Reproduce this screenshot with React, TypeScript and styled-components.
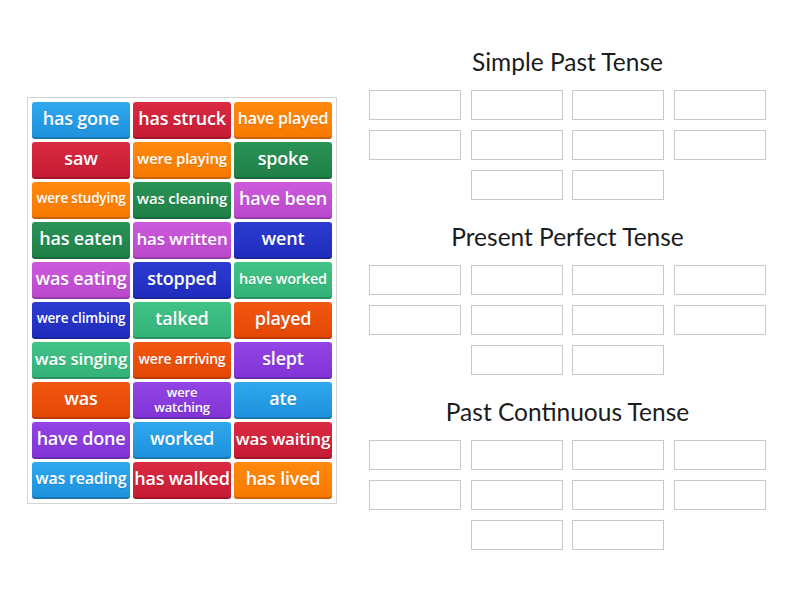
import styled, { createGlobalStyle } from "styled-components";

type Tone =
  | "blue"
  | "red"
  | "orange"
  | "green"
  | "magenta"
  | "royal"
  | "teal"
  | "flame"
  | "violet";

interface Card {
  text: string;
  tone: Tone;
  size?: number;
  wrap?: boolean;
}

const tones: Record<Tone, [string, string]> = {
  blue: ["#2fa8ee", "#1e90dc"],
  red: ["#db2a43", "#c41b33"],
  orange: ["#ff8a0d", "#f87800"],
  green: ["#2a9356", "#1f7f47"],
  magenta: ["#cc5bdc", "#b947cb"],
  royal: ["#2c3bd0", "#1f2cbd"],
  teal: ["#41c286", "#33b276"],
  flame: ["#f2580f", "#e24606"],
  violet: ["#9444e4", "#8133d6"],
};

const cards: Card[] = [
  { text: "has gone", tone: "blue" },
  { text: "has struck", tone: "red" },
  { text: "have played", tone: "orange", size: 16 },
  { text: "saw", tone: "red" },
  { text: "were playing", tone: "orange", size: 15 },
  { text: "spoke", tone: "green" },
  { text: "were studying", tone: "orange", size: 13.5 },
  { text: "was cleaning", tone: "green", size: 15 },
  { text: "have been", tone: "magenta" },
  { text: "has eaten", tone: "green" },
  { text: "has written", tone: "magenta", size: 17 },
  { text: "went", tone: "royal" },
  { text: "was eating", tone: "magenta" },
  { text: "stopped", tone: "royal" },
  { text: "have worked", tone: "teal", size: 14.5 },
  { text: "were climbing", tone: "royal", size: 13.5 },
  { text: "talked", tone: "teal" },
  { text: "played", tone: "flame" },
  { text: "was singing", tone: "teal", size: 17 },
  { text: "were arriving", tone: "flame", size: 14 },
  { text: "slept", tone: "violet" },
  { text: "was", tone: "flame" },
  { text: "were watching", tone: "violet", size: 13, wrap: true },
  { text: "ate", tone: "blue" },
  { text: "have done", tone: "violet" },
  { text: "worked", tone: "blue" },
  { text: "was waiting", tone: "red", size: 17 },
  { text: "was reading", tone: "blue", size: 16 },
  { text: "has walked", tone: "red" },
  { text: "has lived", tone: "orange" },
];

const groups = ["Simple Past Tense", "Present Perfect Tense", "Past Continuous Tense"];

const GlobalStyle = createGlobalStyle`
  html, body {
    margin: 0;
    padding: 0;
    background: #ffffff;
  }
  body {
    font-family: "Open Sans", "Noto Sans", sans-serif;
  }
`;

function App() {
  return (
    <>
      <GlobalStyle />
      <Page>
        <Bank>
          {cards.map((card) => (
            <Tile key={card.text} $tone={card.tone} $size={card.size ?? 18}>
              {card.wrap ? <Wrapped>{card.text}</Wrapped> : card.text}
            </Tile>
          ))}
        </Bank>

        <Groups>
          {groups.map((name) => (
            <Group key={name}>
              <GroupTitle>{name}</GroupTitle>
              <Slots>
                {Array.from({ length: 10 }).map((_, i) => (
                  <Slot key={i} />
                ))}
              </Slots>
            </Group>
          ))}
        </Groups>
      </Page>
    </>
  );
}

const Page = styled.div`
  width: 800px;
  height: 600px;
  display: flex;
  align-items: flex-start;
  padding-left: 27px;
  box-sizing: border-box;
`;

const Bank = styled.div`
  margin-top: 97px;
  width: 310px;
  box-sizing: border-box;
  border: 1px solid #d4d4d4;
  padding: 4px;
  display: grid;
  grid-template-columns: repeat(3, 98px);
  grid-auto-rows: 37px;
  gap: 3px;
`;

const Tile = styled.div<{ $tone: Tone; $size: number }>`
  display: flex;
  align-items: center;
  justify-content: center;
  border-radius: 3px;
  background: linear-gradient(
    ${({ $tone }) => tones[$tone][0]},
    ${({ $tone }) => tones[$tone][1]}
  );
  box-shadow: inset 0 -2px 0 rgba(0, 0, 0, 0.18);
  color: #ffffff;
  font-size: ${({ $size }) => $size}px;
  font-weight: 600;
  white-space: nowrap;
  letter-spacing: -0.2px;
  text-shadow: 0 1px 0 rgba(0, 0, 0, 0.12);
  padding-bottom: 5px;
  box-sizing: border-box;
`;

const Wrapped = styled.span`
  display: block;
  width: 70px;
  white-space: normal;
  text-align: center;
  line-height: 15px;
  margin-top: 3px;
`;

const Groups = styled.div`
  margin-left: 32px;
  width: 397px;
  display: flex;
  flex-direction: column;
  padding-top: 46px;
`;

const Group = styled.div`
  display: flex;
  flex-direction: column;
  align-items: center;
  height: 175px;
`;

const GroupTitle = styled.div`
  font-family: "Lato", "Open Sans", sans-serif;
  font-size: 24.5px;
  line-height: 32px;
  color: #1c1c1c;
  margin-bottom: 12px;
`;

const Slots = styled.div`
  display: grid;
  grid-template-columns: repeat(4, 92px);
  grid-auto-rows: 30px;
  column-gap: 9.5px;
  row-gap: 10px;
`;

const Slot = styled.div`
  box-sizing: border-box;
  border: 1px solid #c8c8c8;
  background: #ffffff;
  &:nth-child(9) {
    grid-column: 2;
  }
`;

export default App;
